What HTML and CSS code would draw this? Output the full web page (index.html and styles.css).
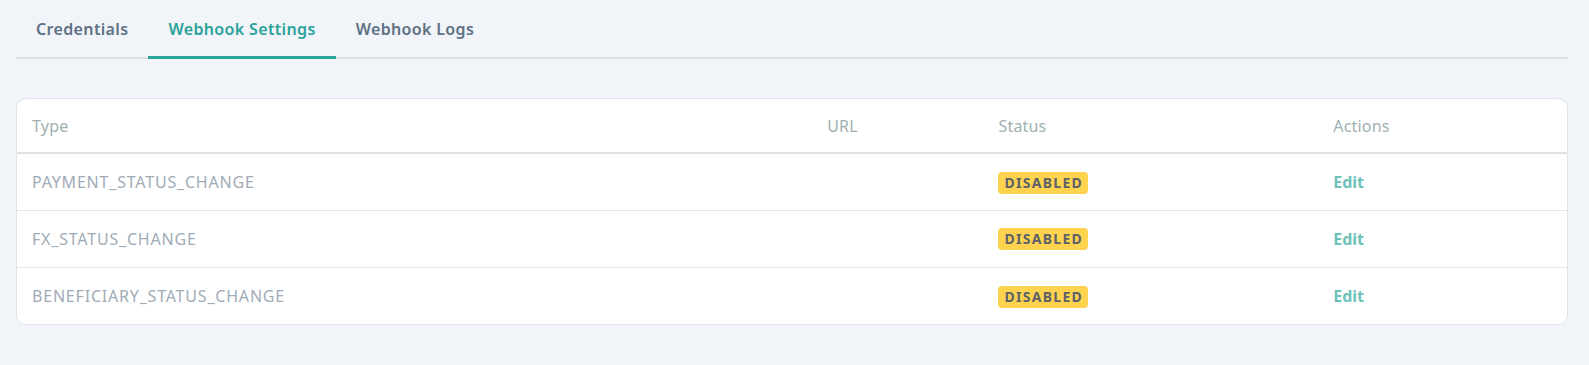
FILE: index.html
```html
<!DOCTYPE html>
<html lang="en">
<head>
<meta charset="utf-8">
<title>Webhook Settings</title>
<link rel="stylesheet" href="styles.css">
</head>
<body>
<div class="page">
  <nav class="tabs">
    <a class="tab">Credentials</a>
    <a class="tab active">Webhook Settings</a>
    <a class="tab">Webhook Logs</a>
  </nav>
  <div class="card">
    <table class="table">
      <colgroup>
        <col class="c-type">
        <col class="c-url">
        <col class="c-status">
        <col class="c-actions">
      </colgroup>
      <thead>
        <tr>
          <th>Type</th>
          <th>URL</th>
          <th>Status</th>
          <th>Actions</th>
        </tr>
      </thead>
      <tbody>
        <tr>
          <td>PAYMENT_STATUS_CHANGE</td>
          <td></td>
          <td><span class="badge">DISABLED</span></td>
          <td><a class="edit">Edit</a></td>
        </tr>
        <tr>
          <td>FX_STATUS_CHANGE</td>
          <td></td>
          <td><span class="badge">DISABLED</span></td>
          <td><a class="edit">Edit</a></td>
        </tr>
        <tr>
          <td>BENEFICIARY_STATUS_CHANGE</td>
          <td></td>
          <td><span class="badge">DISABLED</span></td>
          <td><a class="edit">Edit</a></td>
        </tr>
      </tbody>
    </table>
  </div>
</div>
</body>
</html>
```
FILE: styles.css
```css
* { box-sizing: border-box; }
html, body {
  margin: 0;
  background: #f1f4f9;
  font-family: "Noto Sans", "Open Sans", sans-serif;
}
.page {
  padding: 0 21px 0 16px;
}
.tabs {
  display: flex;
  border-bottom: 2px solid #dde1e7;
  height: 59px;
}
.tab {
  padding: 17px 20px 0;
  font-size: 16px;
  line-height: 24px;
  font-weight: 600;
  letter-spacing: 0.35px;
  color: #5f7184;
  border-bottom: 3px solid transparent;
  margin-bottom: -2px;
  cursor: pointer;
}
.tab.active {
  color: #2ba39a;
  border-bottom-color: #2ba39a;
}
.card {
  margin-top: 39px;
  background: #fff;
  border: 1px solid #dfe4ea;
  border-radius: 10px;
  overflow: hidden;
}
.table {
  width: 100%;
  border-collapse: collapse;
  table-layout: fixed;
}
.c-type { width: 51.3%; }
.c-url { width: 11.05%; }
.c-status { width: 21.6%; }
.c-actions { width: 16.05%; }
th {
  text-align: left;
  font-weight: 400;
  font-size: 16px;
  letter-spacing: 0.2px;
  color: #9fb0b2;
  height: 54px;
  padding: 0 15px;
  border-bottom: 2px solid #dee2e7;
}
td {
  height: 57px;
  padding: 0 15px;
  font-size: 16px;
  letter-spacing: 0.8px;
  color: #a0abb8;
  border-top: 1px solid #e3e6ea;
}
tbody tr:first-child td { border-top: none; }
.badge {
  display: inline-block;
  vertical-align: middle;
  background: #ffd34e;
  color: #5d6168;
  font-family: "Noto Sans", sans-serif;
  font-weight: 700;
  font-size: 14px;
  letter-spacing: 1.3px;
  line-height: 22px;
  padding: 0 5px 0 6px;
  border-radius: 4px;
}
.edit {
  color: #6cc2b8;
  font-weight: 700;
  letter-spacing: 0;
  cursor: pointer;
}
```
